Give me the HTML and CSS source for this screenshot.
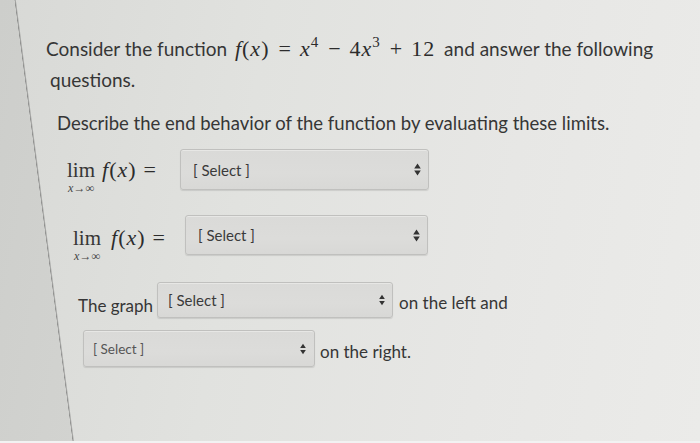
FILE: index.html
```html
<!DOCTYPE html>
<html>
<head>
<meta charset="utf-8">
<link rel="stylesheet" href="styles.css">
</head>
<body>
<div class="page">
  <p class="intro">
    <span class="l1">Consider the function <span class="math"><i>f</i>(<i>x</i>)<span class="op">=</span><i>x</i><sup>4</sup><span class="op">−</span>4<i>x</i><sup>3</sup><span class="op">+</span>12</span> and answer the following</span><br>
    <span class="l2">questions.</span>
  </p>
  <p class="describe">Describe the end behavior of the function by evaluating these limits.</p>

  <div class="row row1">
    <span class="lim"><span class="limword"><span class="lim-top">lim</span><span class="lim-sub">x→∞</span></span><span class="math fx"><i>f</i>(<i>x</i>)<span class="op">=</span></span></span>
    <div class="sel sel1"><span class="sel-text">[ Select ]</span><svg class="arrows" width="7" height="13" viewBox="0 0 7 13"><path d="M3.5 0.5 L6.8 5.4 L0.2 5.4 Z M0.2 7.6 L6.8 7.6 L3.5 12.5 Z" fill="#333"/></svg></div>
  </div>

  <div class="row row2">
    <span class="lim"><span class="limword"><span class="lim-top">lim</span><span class="lim-sub">x→∞</span></span><span class="math fx"><i>f</i>(<i>x</i>)<span class="op">=</span></span></span>
    <div class="sel sel2"><span class="sel-text">[ Select ]</span><svg class="arrows" width="7" height="13" viewBox="0 0 7 13"><path d="M3.5 0.5 L6.8 5.4 L0.2 5.4 Z M0.2 7.6 L6.8 7.6 L3.5 12.5 Z" fill="#333"/></svg></div>
  </div>

  <div class="row row3">
    <span class="txt graph">The graph</span>
    <div class="sel sel3"><span class="sel-text">[ Select ]</span><svg class="arrows" width="6" height="12" viewBox="0 0 7 13"><path d="M3.5 0.5 L6.8 5.4 L0.2 5.4 Z M0.2 7.6 L6.8 7.6 L3.5 12.5 Z" fill="#333"/></svg></div>
    <span class="txt after">on the left and</span>
  </div>

  <div class="row row4">
    <div class="sel sel4"><span class="sel-text small">[ Select ]</span><svg class="arrows" width="6" height="12" viewBox="0 0 7 13"><path d="M3.5 0.5 L6.8 5.4 L0.2 5.4 Z M0.2 7.6 L6.8 7.6 L3.5 12.5 Z" fill="#333"/></svg></div>
    <span class="txt after">on the right.</span>
  </div>
</div>
</body>
</html>
```

FILE: styles.css
```css
html, body {
  margin: 0;
  padding: 0;
}
body {
  width: 700px;
  height: 443px;
  overflow: hidden;
  font-family: "Lato", "Open Sans", sans-serif;
  color: #363636;
  background:
    linear-gradient(82.5deg, rgba(0,0,0,0.05) 0, rgba(0,0,0,0.05) 72px, rgba(80,80,80,0.55) 72.5px, rgba(80,80,80,0.2) 73.5px, rgba(0,0,0,0) 74px),
    linear-gradient(100deg, #d8d9d6 0%, #e1e2df 35%, #e7e7e5 70%, #ebebe9 100%);
}
.page {
  height: 443px;
  box-sizing: border-box;
  padding-top: 33px;
  border-bottom: 2px solid #f2f2f2;
}
.intro {
  margin: 0 0 16px 46px;
  font-size: 19px;
  line-height: 31px;
  white-space: nowrap;
}
.l2 { margin-left: 4px; }
.math {
  font-family: "Liberation Serif", "DejaVu Serif", serif;
  font-size: 22px;
  letter-spacing: 1px;
  color: #2c2c2c;
}
.l1 .math { margin-left: 3px; margin-right: 4px; }
.math i { font-style: italic; }
.math sup {
  font-size: 15px;
  line-height: 0;
  vertical-align: 9px;
}
.op {
  display: inline-block;
  margin: 0 9px;
  letter-spacing: 0;
}
.describe {
  margin: 0 0 14px 57px;
  font-size: 18.5px;
  line-height: 24px;
  white-space: nowrap;
}
.row {
  display: flex;
  align-items: center;
}
.row1 { margin-left: 67px; height: 41px; }
.row2 { margin-left: 73px; height: 40px; margin-top: 25px; }
.row3 { margin-left: 78px; height: 36px; margin-top: 27px; }
.row4 { margin-left: 83px; height: 37px; margin-top: 12px; }
.lim {
  display: flex;
  align-items: baseline;
  width: 113px;
  flex: none;
  align-self: flex-start;
  padding-top: 10px;
}
.row2 .lim { width: 112px; padding-top: 12px; }
.limword {
  display: flex;
  flex-direction: column;
  align-items: center;
  font-family: "Liberation Serif", "DejaVu Serif", serif;
  margin-right: 7px;
}
.row2 .limword { margin-right: 10px; }
.lim-top {
  font-size: 21px;
  line-height: 22px;
}
.lim-sub {
  font-family: "Liberation Serif", "DejaVu Serif", serif;
  font-style: italic;
  font-size: 12px;
  line-height: 11px;
  margin-top: 2px;
  color: #444;
}
.fx { font-size: 22px; line-height: 22px; }
.fx .op { margin: 0 0 0 7px; }
.sel {
  flex: none;
  box-sizing: border-box;
  height: 100%;
  display: flex;
  align-items: center;
  justify-content: space-between;
  padding: 0 7px 0 12px;
  background: linear-gradient(180deg, #dadad8 0%, #dcdcda 60%, #d8d8d6 100%);
  border: 1px solid #c0c0be;
  border-radius: 3px;
  box-shadow: 0 1px 1px rgba(0,0,0,0.1), inset 0 1px 0 rgba(255,255,255,0.35);
}
.sel1 { width: 249px; }
.sel2 { width: 243px; }
.sel3 { width: 236px; margin-left: 4px; padding-left: 10px; }
.sel4 { width: 232px; padding-left: 9px; padding-right: 8px; }
.sel-text {
  font-size: 15px;
  color: #3a3a3a;
}
.sel-text.small { font-size: 13.5px; color: #555; }
.arrows { flex: none; }
.txt {
  font-size: 17px;
}
.graph {
  margin-top: 10px;
}
.row3 .after { margin-left: 6px; margin-top: 4px; }
.row4 .after { margin-left: 5px; margin-top: 6px; }
```
